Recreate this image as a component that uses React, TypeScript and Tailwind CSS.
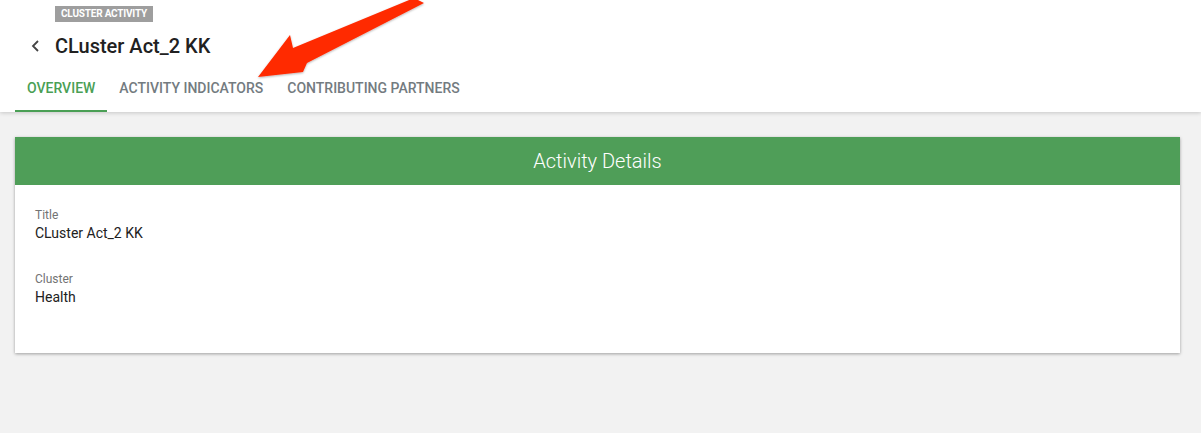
import React from "react";

export default function App() {
  return (
    <div
      className="relative min-h-[433px] w-[1201px] overflow-hidden bg-[#f2f2f2]"
      style={{ fontFamily: "Roboto, 'Noto Sans', sans-serif" }}
    >
      <header className="relative z-10 h-[112px] bg-white shadow-[0_1px_4px_rgba(0,0,0,0.18)]">
        <div className="flex flex-col pl-[55px] pt-[6px]">
          <div className="flex">
            <span className="flex h-[16px] items-center bg-[#9e9e9e] px-[6px] text-[10px] font-bold uppercase leading-none tracking-[-0.2px] text-white">
              Cluster Activity
            </span>
          </div>
          <div className="relative mt-[12px] flex h-[24px] items-center">
            <svg
              className="absolute left-[-26px] top-[5px]"
              width="14"
              height="14"
              viewBox="0 0 14 14"
            >
              <path d="M9 2 L4 7 L9 12" fill="none" stroke="#444" strokeWidth="1.8" />
            </svg>
            <h1 className="text-[20px] font-medium leading-[24px] text-[#212121]">
              CLuster Act_2 KK
            </h1>
          </div>
        </div>
        <nav className="absolute bottom-0 left-[15px] flex h-[48px]">
          <div className="flex h-full items-center border-b-2 border-[#4a9f55] px-[12px] pt-[2px] text-[14px] font-medium uppercase text-[#4a9f55]">
            Overview
          </div>
          <div className="flex h-full items-center px-[12px] text-[14px] font-medium uppercase text-[#737b80]">
            Activity Indicators
          </div>
          <div className="flex h-full items-center px-[12px] text-[14px] font-medium uppercase text-[#737b80]">
            Contributing Partners
          </div>
        </nav>
      </header>

      <main className="pl-[15px] pt-[25px]">
        <section className="w-[1165px] bg-white shadow-[0_1px_3px_rgba(0,0,0,0.35)]">
          <div className="flex h-[48px] items-center justify-center bg-[#4f9e58] text-[20px] font-light text-white">
            Activity Details
          </div>
          <div className="flex flex-col gap-[28px] px-[20px] pb-[46px] pt-[22px]">
            <div className="flex flex-col">
              <span className="text-[12px] leading-[16px] text-[#737373]">Title</span>
              <span className="text-[14px] leading-[20px] text-[#212121]">CLuster Act_2 KK</span>
            </div>
            <div className="flex flex-col">
              <span className="text-[12px] leading-[16px] text-[#737373]">Cluster</span>
              <span className="text-[14px] leading-[20px] text-[#212121]">Health</span>
            </div>
          </div>
        </section>
      </main>

      <svg
        className="pointer-events-none absolute left-0 top-0 z-20"
        width="1201"
        height="433"
        viewBox="0 0 1201 433"
      >
        <defs>
          <filter id="sh" x="-20%" y="-20%" width="140%" height="140%">
            <feDropShadow dx="0" dy="1" stdDeviation="1" floodColor="#000" floodOpacity="0.3" />
          </filter>
        </defs>
        <polygon
          points="258,77 290,35 293,48 414,-2 424,3 307,63 303,72"
          fill="#ff2a00"
          filter="url(#sh)"
        />
      </svg>
    </div>
  );
}
